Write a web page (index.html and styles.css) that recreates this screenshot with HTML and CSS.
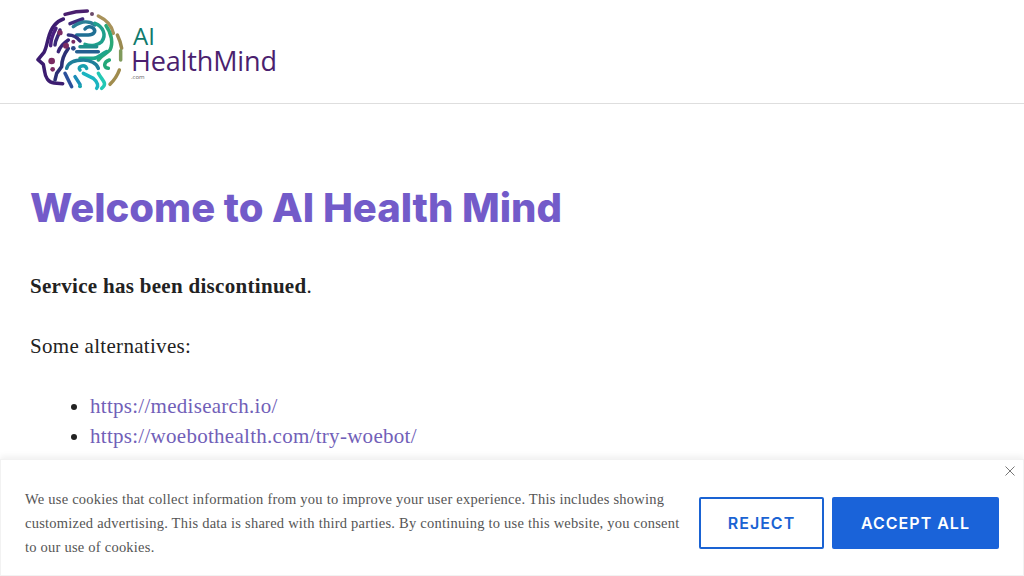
FILE: index.html
```html
<!DOCTYPE html>
<html lang="en">
<head>
    <meta charset="UTF-8">
    <title>AI Health Mind</title>
    <link rel="stylesheet" href="styles.css">
</head>
<body>

<header class="site-header">
    <a class="logo" href="#">
        <svg class="logo-mark" width="100" height="88" viewBox="0 0 300 264" fill="none" stroke-width="10.5" stroke-linecap="round" stroke-linejoin="round">
            <!-- face outline -->
            <path stroke="#3c1c70" d="M100 42C75 50 62 72 55 100C50 118 48 132 42 142L24 164L40 178L44 200C46 218 56 232 72 234L98 236"/>
            <path stroke="#4a2080" d="M78 70C68 88 62 104 62 122"/>
            <path stroke="#4a1f6e" d="M105 28C125 22 150 18 172 18"/>
            <path stroke="#3f2b7c" d="M120 56L158 42"/>
            <!-- right edge -->
            <path stroke="#a8925a" d="M205 33C230 45 246 62 250 85"/>
            <path stroke="#9a8a50" d="M262 90C268 102 273 116 275 130"/>
            <path stroke="#7f9a5c" d="M272 137V165"/>
            <path stroke="#a08c4e" d="M268 195C262 212 252 226 240 238"/>
            <!-- inner tracks -->
            <path stroke="#2a7f96" d="M130 65C150 50 175 45 195 60"/>
            <path stroke="#1f6f94" d="M140 90H175C190 90 200 80 190 70C182 62 170 65 165 72"/>
            <path stroke="#1ea08c" d="M195 55C220 65 230 90 215 110C205 120 185 125 165 118"/>
            <path stroke="#2aa878" d="M228 62C245 85 250 115 240 135C232 145 215 150 205 165"/>
            <path stroke="#33307c" d="M115 90C130 90 140 95 150 108"/>
            <path stroke="#3a2a78" d="M90 75C85 95 75 105 75 120"/>
            <path stroke="#3a2478" d="M85 140C90 125 100 115 115 105"/>
            <path stroke="#2c2f74" d="M115 130C100 150 95 170 95 185L80 205L75 225"/>
            <path stroke="#245f90" d="M140 140H205"/>
            <path stroke="#1f8f8c" d="M150 125H200"/>
            <path stroke="#1ea58a" d="M150 160H190C205 160 210 150 230 140"/>
            <path stroke="#23a878" d="M238 165C222 170 218 188 235 190"/>
            <path stroke="#1f7f9a" d="M110 190C115 170 135 165 160 165C180 165 200 175 205 190"/>
            <path stroke="#19a0b0" d="M150 195C140 185 165 175 170 190"/>
            <path stroke="#1bb4c0" d="M160 205L190 220C205 232 205 245 200 250"/>
            <path stroke="#2a4f9a" d="M105 205L125 245"/>
            <path stroke="#1b8db8" d="M135 215L150 238"/>
            <path stroke="#22c8b4" d="M205 205C215 225 235 235 215 250"/>
            <!-- nodes -->
            <g stroke="none">
                <circle cx="186" cy="27" r="6" fill="#6a4a6a"/>
                <circle cx="90" cy="83" r="8" fill="#7a2a62"/>
                <circle cx="108" cy="122" r="9" fill="#7a2a62"/>
                <circle cx="130" cy="110" r="6" fill="#7a2a62"/>
                <circle cx="130" cy="130" r="7" fill="#2d4a8a"/>
                <circle cx="65" cy="168" r="10" fill="#7a2a62"/>
                <circle cx="68" cy="193" r="7" fill="#7a2a62"/>
                <circle cx="150" cy="244" r="6" fill="#19a6b0"/>
            </g>
        </svg>
        <span class="logo-text">
            <span class="logo-ai">AI</span>
            <span class="logo-name">HealthMind</span>
            <span class="logo-com">.com</span>
        </span>
    </a>
</header>

<main class="content">
    <h1>Welcome to AI Health Mind</h1>
    <p><strong>Service has been discontinued</strong>.</p>
    <p>Some alternatives:</p>
    <ul>
        <li><a href="#">https://medisearch.io/</a></li>
        <li><a href="#">https://woebothealth.com/try-woebot/</a></li>
    </ul>
</main>

<div class="cookie-banner">
    <p class="cookie-text">We use cookies that collect information from you to improve your user experience. This includes showing customized advertising. This data is shared with third parties. By continuing to use this website, you consent to our use of cookies.</p>
    <div class="cookie-buttons">
        <button class="btn-reject">REJECT</button>
        <button class="btn-accept">ACCEPT ALL</button>
    </div>
    <button class="cookie-close" aria-label="Close">
        <svg width="10" height="10" viewBox="0 0 10 10" stroke="#777" stroke-width="1"><path d="M.5 .5L9.5 9.5M9.5 .5L.5 9.5"/></svg>
    </button>
</div>

</body>
</html>
```

FILE: styles.css
```css
body {
    font-family: "Liberation Serif", serif;
    margin: 0;
    padding: 0;
    height: 576px;
    overflow: hidden;
    background-color: #ffffff;
    color: #222;
}

.site-header {
    height: 103px;
    padding-left: 30px;
    border-bottom: 1px solid #dedede;
}

.logo {
    display: flex;
    align-items: flex-start;
    gap: 1px;
    padding-top: 5px;
    text-decoration: none;
}

.logo-mark {
    filter: blur(0.4px);
}

.logo-text {
    display: flex;
    flex-direction: column;
    font-family: "Open Sans", sans-serif;
    padding-top: 19px;
}

.logo-ai {
    color: #0f7a6c;
    font-size: 24px;
    line-height: 24px;
    margin-left: 2px;
}

.logo-name {
    color: #4b1f6f;
    font-size: 27px;
    line-height: 26px;
    letter-spacing: -0.15px;
}

.logo-com {
    color: #666;
    font-size: 6px;
    line-height: 6px;
}

.content {
    padding: 80px 30px 0;
}

h1 {
    font-family: Inter, sans-serif;
    font-size: 40px;
    font-weight: 800;
    line-height: 48px;
    letter-spacing: -0.04px;
    color: #735bc9;
    margin: 0 0 39px;
}

p {
    margin: 0;
}

.content p {
    font-size: 21px;
    line-height: 30px;
    letter-spacing: 0.3px;
    margin-bottom: 30px;
}

.content ul {
    margin: 0;
    padding-left: 60px;
    font-size: 21px;
    line-height: 30px;
    letter-spacing: 0.28px;
}

.content a {
    color: #7160b8;
    text-decoration: none;
}

.cookie-banner {
    position: absolute;
    left: 0;
    right: 0;
    bottom: 0;
    height: 117px;
    box-sizing: border-box;
    background-color: #ffffff;
    border: 1px solid #f2f2f2;
    box-shadow: 0 -3px 6px rgba(0, 0, 0, 0.06);
    padding: 10px 24px 0;
    display: flex;
    align-items: center;
    gap: 18px;
}

.cookie-text {
    flex: 1;
    font-size: 14.5px;
    line-height: 24px;
    letter-spacing: 0.23px;
    color: #555;
}

.cookie-buttons {
    display: flex;
    gap: 8px;
}

.cookie-buttons button {
    font-family: Inter, sans-serif;
    font-size: 16px;
    font-weight: 600;
    letter-spacing: 1px;
    height: 52px;
    border-radius: 2px;
    cursor: pointer;
}

.btn-reject {
    width: 125px;
    color: #1a63d3;
    background-color: #ffffff;
    border: 2px solid #1a63d3;
}

.btn-accept {
    width: 167px;
    color: #ffffff;
    background-color: #1a63d9;
    border: none;
}

.cookie-close {
    position: absolute;
    top: 4px;
    right: 8px;
    padding: 0;
    border: none;
    background: none;
    cursor: pointer;
}
```
